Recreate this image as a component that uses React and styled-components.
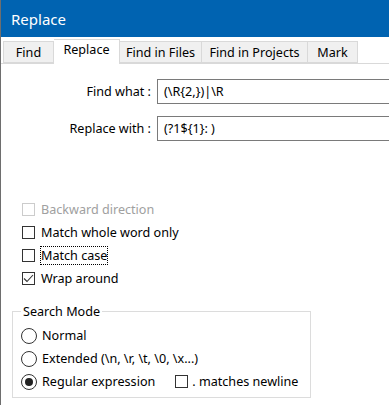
import React from "react";
import styled, { createGlobalStyle } from "styled-components";

const Global = createGlobalStyle`
  html, body { margin: 0; padding: 0; background: #ffffff; }
  body { font-family: "Noto Sans", "Open Sans", sans-serif; }
`;

const Window = styled.div`
  width: 389px;
  height: 405px;
  overflow: hidden;
  background: #ffffff;
  border-left: 1px solid #6e6e6e;
  box-sizing: border-box;
  display: flex;
  flex-direction: column;
  font-size: 12.6px;
  color: #000;
`;

const TitleBar = styled.div`
  height: 37px;
  flex: none;
  background: #0063b1;
  color: #ffffff;
  font-size: 15px;
  display: flex;
  align-items: center;
  padding-left: 10px;
`;

const TabStrip = styled.div`
  height: 25px;
  flex: none;
  display: flex;
  align-items: flex-end;
  padding-left: 2px;
  border-bottom: 1px solid #d9d9d9;
  margin-top: 1px;
`;

const Tab = styled.div`
  width: ${(p) => p.w}px;
  height: ${(p) => (p.active ? "25px" : "22px")};
  box-sizing: border-box;
  padding-top: ${(p) => (p.active ? "1px" : "2px")};
  margin-bottom: ${(p) => (p.active ? "-1px" : "0")};
  background: ${(p) => (p.active ? "#ffffff" : "#f0f0f0")};
  border: 1px solid #d9d9d9;
  border-bottom: ${(p) => (p.active ? "none" : "1px solid #d9d9d9")};
  border-left: ${(p) => (p.first ? "1px solid #d9d9d9" : "none")};
  text-align: center;
  white-space: nowrap;
`;

const Body = styled.div`
  flex: 1;
  display: flex;
  flex-direction: column;
  padding-top: 15px;
`;

const FieldRow = styled.div`
  display: flex;
  align-items: center;
  gap: 6px;
  margin-bottom: 12px;
`;

const FieldLabel = styled.label`
  width: 150px;
  flex: none;
  text-align: right;
`;

const TextBox = styled.div`
  height: 25px;
  width: 260px;
  flex: none;
  box-sizing: border-box;
  border: 1px solid #7a7a7a;
  padding: 0 6px;
  display: flex;
  align-items: center;
  white-space: pre;
`;

const Options = styled.div`
  display: flex;
  flex-direction: column;
  gap: 7.3px;
  padding-left: 21px;
  margin-top: 48px;
`;

const CheckRow = styled.div`
  display: flex;
  align-items: center;
  gap: 6px;
  height: 16px;
  color: ${(p) => (p.disabled ? "#a0a0a0" : "#000")};
`;

const Box = styled.span`
  width: 13px;
  height: 13px;
  flex: none;
  box-sizing: border-box;
  border: 1px solid ${(p) => (p.disabled ? "#cccccc" : "#333333")};
  background: #fff;
  display: flex;
  align-items: center;
  justify-content: center;
`;

const Focus = styled.span`
  outline: 1px dotted #000;
  outline-offset: 0px;
`;

const Group = styled.fieldset`
  margin: 16px 0 0 11px;
  width: 299px;
  box-sizing: border-box;
  border: 1px solid #dcdcdc;
  padding: 8px 0 7px 8px;
  display: flex;
  flex-direction: column;
  gap: 7px;
`;

const Legend = styled.legend`
  padding: 0 2px;
  margin-left: 0;
`;

const RadioRow = styled.div`
  display: flex;
  align-items: center;
  gap: 5px;
  height: 16px;
`;

const Radio = styled.span`
  width: 16px;
  height: 16px;
  flex: none;
  box-sizing: border-box;
  border: 1px solid #333;
  border-radius: 50%;
  display: flex;
  align-items: center;
  justify-content: center;
  &::after {
    content: "";
    width: 8px;
    height: 8px;
    border-radius: 50%;
    background: ${(p) => (p.checked ? "#222" : "transparent")};
  }
`;

const Inline = styled.div`
  display: flex;
  align-items: center;
  gap: 4px;
  margin-left: 15px;
`;

function Check({ checked, disabled }) {
  return (
    <Box disabled={disabled}>
      {checked && (
        <svg width="11" height="11" viewBox="0 0 11 11">
          <path d="M1 5.5 L4 8.5 L10 2" fill="none" stroke="#333" strokeWidth="1.1" />
        </svg>
      )}
    </Box>
  );
}

const tabs = [
  { label: "Find", w: 51 },
  { label: "Replace", w: 66 },
  { label: "Find in Files", w: 82 },
  { label: "Find in Projects", w: 106 },
  { label: "Mark", w: 50 },
];

export default function App() {
  return (
    <Window>
      <Global />
      <TitleBar>Replace</TitleBar>
      <TabStrip>
        {tabs.map((t, i) => (
          <Tab key={t.label} w={t.w} first={i === 0} active={t.label === "Replace"}>
            {t.label}
          </Tab>
        ))}
      </TabStrip>
      <Body>
        <FieldRow>
          <FieldLabel>Find what :</FieldLabel>
          <TextBox>{"(\\R{2,})|\\R"}</TextBox>
        </FieldRow>
        <FieldRow>
          <FieldLabel>Replace with :</FieldLabel>
          <TextBox>{"(?1${1}: )"}</TextBox>
        </FieldRow>
        <Options>
          <CheckRow disabled>
            <Check disabled />
            Backward direction
          </CheckRow>
          <CheckRow>
            <Check />
            Match whole word only
          </CheckRow>
          <CheckRow>
            <Check />
            <Focus>Match case</Focus>
          </CheckRow>
          <CheckRow>
            <Check checked />
            Wrap around
          </CheckRow>
        </Options>
        <Group>
          <Legend>Search Mode</Legend>
          <RadioRow>
            <Radio />
            Normal
          </RadioRow>
          <RadioRow>
            <Radio />
            {"Extended (\\n, \\r, \\t, \\0, \\x...)"}
          </RadioRow>
          <RadioRow>
            <Radio checked />
            Regular expression
            <Inline>
              <Check />
              . matches newline
            </Inline>
          </RadioRow>
        </Group>
      </Body>
    </Window>
  );
}
